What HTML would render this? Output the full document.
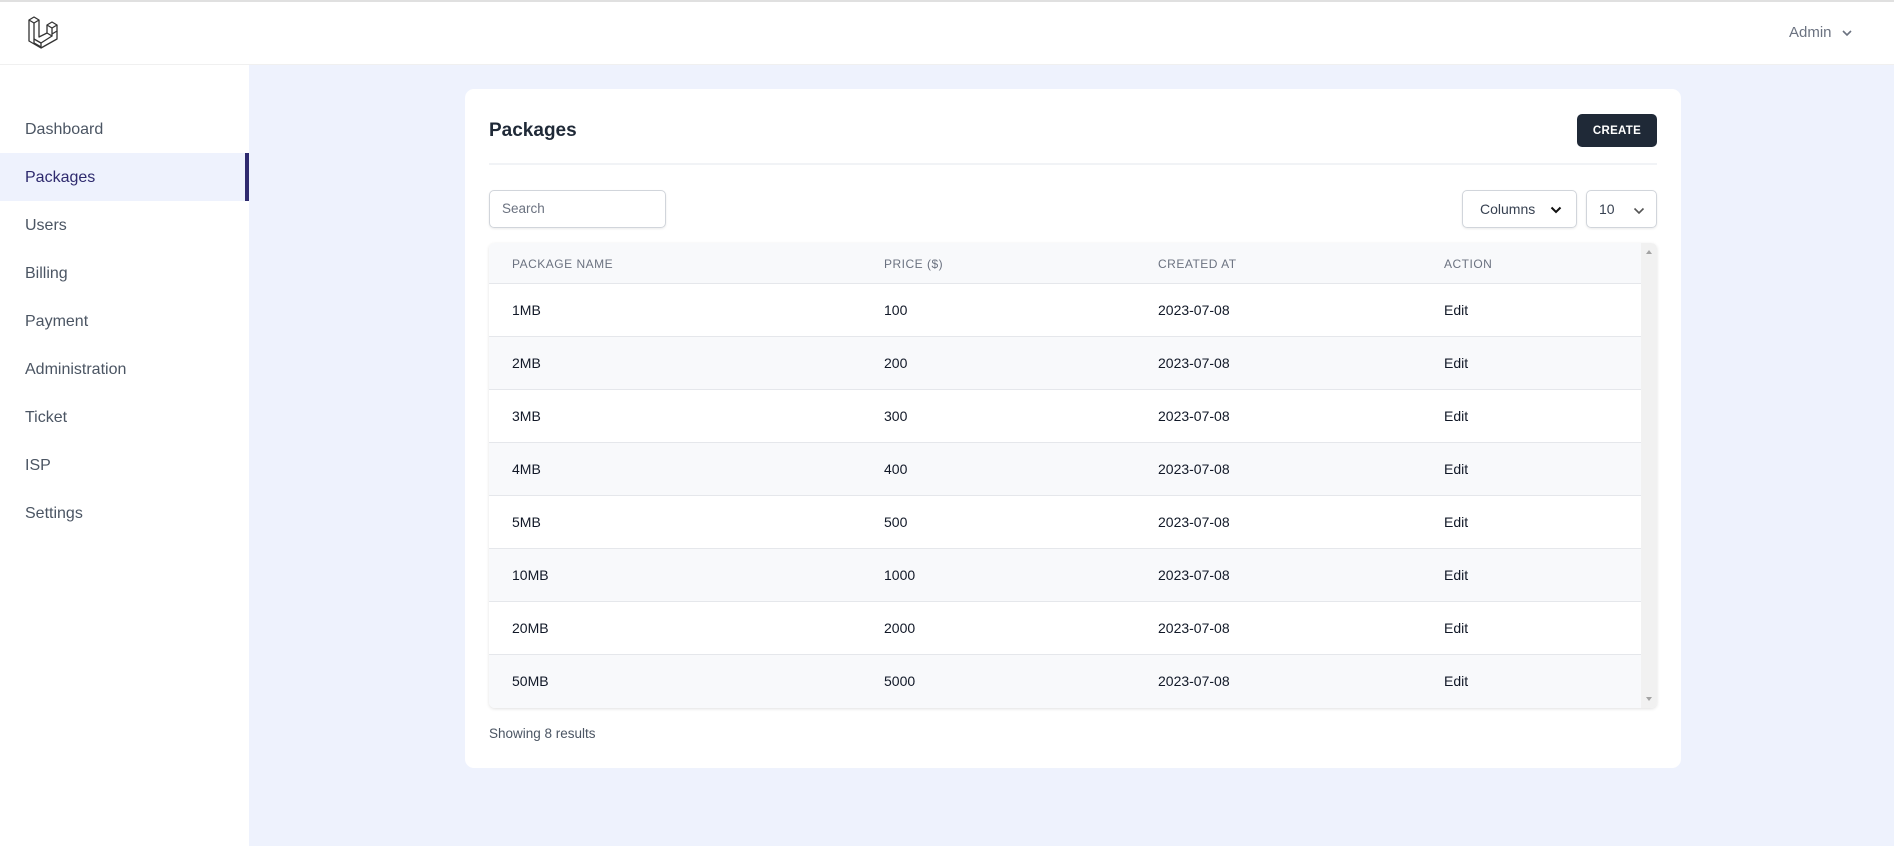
<!DOCTYPE html>
<html><head><meta charset="utf-8"><style>
*{box-sizing:border-box;margin:0;padding:0}
body{width:1894px;height:846px;overflow:hidden;background:#eef2fd;font-family:"Liberation Sans",sans-serif;color:#1f2937;position:relative}
.hdr{position:absolute;left:0;top:0;width:1894px;height:65px;background:#fff;border-top:2px solid #e0e0e0;border-bottom:1px solid #f0f0f0}
.admin{position:absolute;left:1789px;top:22px;font-size:15px;color:#6b7280}
.side{position:absolute;left:0;top:65px;width:249px;height:781px;background:#fff}
.mi{position:absolute;left:0;width:249px;height:48px;line-height:50px;padding-left:25px;font-size:16px;color:#4b5563}
.mi.act{background:#eef2fd;border-right:4px solid #2e2a6e;color:#2e2a6e}
.card{position:absolute;left:465px;top:89px;width:1216px;height:679px;background:#fff;border-radius:9px}
.title{position:absolute;left:24px;top:31px;font-size:19px;font-weight:bold;color:#1f2937}
.btn{position:absolute;left:1112px;top:25px;width:80px;height:33px;background:#1f2937;color:#fff;border-radius:5px;font-size:11.5px;font-weight:bold;text-align:center;line-height:35px;letter-spacing:.3px}
.sep{position:absolute;left:24px;top:74px;width:1168px;height:2px;background:#f1f3f6}
.inp{position:absolute;top:101px;height:38px;border:1px solid #d1d5db;border-radius:5px;font-size:14px;line-height:36px;box-shadow:0 1px 2px rgba(0,0,0,.08)}
.tbl{position:absolute;left:24px;top:154px;width:1168px;height:465px;border-radius:6px;overflow:hidden;box-shadow:0 1px 3px rgba(0,0,0,.12)}
.th{position:absolute;left:0;top:0;width:1152px;height:41px;background:#f8f9fb;border-bottom:1px solid #e5e7eb}
.row{position:absolute;left:0;width:1152px;height:53px;border-bottom:1px solid #e5e7eb;font-size:14px;color:#111827}
.row span,.th span{position:absolute}
.th span{top:14px;font-size:12px;color:#6b7280;letter-spacing:.5px}
.row span{top:18px}
.sb{position:absolute;left:1152px;top:0;width:16px;height:465px;background:#f1f1f1}
</style></head><body>
<div class="hdr">
<svg style="position:absolute;left:27px;top:13px" width="38" height="36" viewBox="0 0 38 36" fill="none" stroke="#333" stroke-width="1.3" stroke-linejoin="round">
<path d="M2 5L7 2L12 5L7 8Z"/>
<path d="M2 5V26L14 33L30 24V16"/>
<path d="M7 8V28L14 32"/>
<path d="M12 5V22L20 18"/>
<path d="M7 24L14 28L25 21"/>
<path d="M14 28V33"/>
<path d="M20 10L25 7L30 10L25 13Z"/>
<path d="M20 10V18L25 21V13M30 10V16L25 19"/>
</svg>
<div class="admin">Admin <svg width="10" height="8" viewBox="0 0 10 8" style="margin-left:6px"><path d="M1 2l4 4 4-4" stroke="#6b7280" stroke-width="1.6" fill="none"/></svg></div>
</div>
<div class="side">
<div class="mi" style="top:40px">Dashboard</div>
<div class="mi act" style="top:88px">Packages</div>
<div class="mi" style="top:136px">Users</div>
<div class="mi" style="top:184px">Billing</div>
<div class="mi" style="top:232px">Payment</div>
<div class="mi" style="top:280px">Administration</div>
<div class="mi" style="top:328px">Ticket</div>
<div class="mi" style="top:376px">ISP</div>
<div class="mi" style="top:424px">Settings</div>
</div>
<div class="card">
<div class="title">Packages</div>
<div class="btn">CREATE</div>
<div class="sep"></div>
<div class="inp" style="left:24px;width:177px;padding-left:12px;color:#6b7280;font-size:13.5px">Search</div>
<div class="inp" style="left:997px;width:115px;padding-left:17px;color:#374151">Columns<svg width="12" height="8" viewBox="0 0 12 8" style="position:absolute;left:87px;top:15px"><path d="M1.5 1.5l4.5 4.5 4.5-4.5" stroke="#111" stroke-width="2" fill="none"/></svg></div>
<div class="inp" style="left:1121px;width:71px;padding-left:12px;color:#374151">10<svg width="12" height="8" viewBox="0 0 12 8" style="position:absolute;left:46px;top:16px"><path d="M1.5 1.5l4.5 4.5 4.5-4.5" stroke="#555" stroke-width="1.6" fill="none"/></svg></div>
<div class="tbl">
<div class="th"><span style="left:23px">PACKAGE NAME</span><span style="left:395px">PRICE ($)</span><span style="left:669px">CREATED AT</span><span style="left:955px">ACTION</span></div>
<div class="row" style="top:41px;background:#fff"><span style="left:23px">1MB</span><span style="left:395px">100</span><span style="left:669px">2023-07-08</span><span style="left:955px">Edit</span></div>
<div class="row" style="top:94px;background:#f8f9fb"><span style="left:23px">2MB</span><span style="left:395px">200</span><span style="left:669px">2023-07-08</span><span style="left:955px">Edit</span></div>
<div class="row" style="top:147px;background:#fff"><span style="left:23px">3MB</span><span style="left:395px">300</span><span style="left:669px">2023-07-08</span><span style="left:955px">Edit</span></div>
<div class="row" style="top:200px;background:#f8f9fb"><span style="left:23px">4MB</span><span style="left:395px">400</span><span style="left:669px">2023-07-08</span><span style="left:955px">Edit</span></div>
<div class="row" style="top:253px;background:#fff"><span style="left:23px">5MB</span><span style="left:395px">500</span><span style="left:669px">2023-07-08</span><span style="left:955px">Edit</span></div>
<div class="row" style="top:306px;background:#f8f9fb"><span style="left:23px">10MB</span><span style="left:395px">1000</span><span style="left:669px">2023-07-08</span><span style="left:955px">Edit</span></div>
<div class="row" style="top:359px;background:#fff"><span style="left:23px">20MB</span><span style="left:395px">2000</span><span style="left:669px">2023-07-08</span><span style="left:955px">Edit</span></div>
<div class="row" style="top:412px;background:#f8f9fb;border-bottom:none"><span style="left:23px">50MB</span><span style="left:395px">5000</span><span style="left:669px">2023-07-08</span><span style="left:955px">Edit</span></div>
<div class="sb"><svg width="16" height="465" style="position:absolute;left:0;top:0"><path d="M5 11l3-4 3 4z" fill="#a3a3a3"/><path d="M5 454l3 4 3-4z" fill="#a3a3a3"/></svg></div>
</div>
<div style="position:absolute;left:24px;top:637px;font-size:13.5px;color:#4b5563">Showing 8 results</div>
</div>
</body></html>
